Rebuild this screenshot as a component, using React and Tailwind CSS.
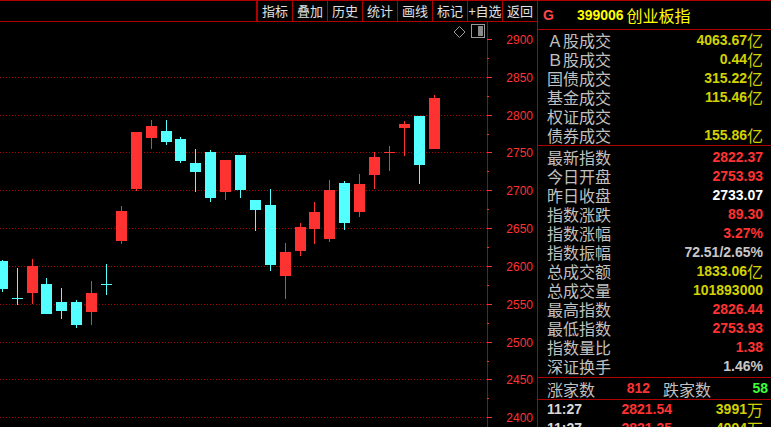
const RED = "#ff3232";
const CYAN = "#54ffff";
const LINE = "#b00000";

const cjk = { fontFamily: '"Noto Sans CJK SC", sans-serif' };
const num = { fontFamily: '"Liberation Sans", Arial, sans-serif' };

// x, bodyTop, bodyBottom, wickTop, wickBottom, up
const candles = [
  [-3, 261, 289, 260, 292, false],
  [12, 298, 298, 268, 305, false],
  [27, 266, 293, 259, 304, true],
  [41, 284, 314, 278, 314, false],
  [56, 302, 311, 288, 319, false],
  [71, 302, 325, 300, 328, false],
  [86, 293, 312, 281, 325, true],
  [101, 284, 284, 264, 295, false],
  [116, 211, 241, 206, 244, true],
  [131, 132, 189, 132, 191, true],
  [146, 126, 138, 120, 149, true],
  [161, 131, 142, 120, 145, false],
  [175, 139, 161, 137, 163, false],
  [190, 163, 172, 149, 192, false],
  [205, 152, 198, 150, 202, false],
  [220, 160, 192, 160, 200, true],
  [235, 155, 190, 155, 198, false],
  [250, 200, 210, 200, 231, false],
  [265, 205, 265, 189, 271, false],
  [280, 252, 276, 243, 299, true],
  [295, 227, 251, 223, 256, true],
  [309, 212, 229, 202, 244, true],
  [324, 190, 239, 180, 242, true],
  [339, 183, 223, 181, 230, false],
  [354, 184, 212, 174, 217, true],
  [369, 157, 175, 152, 189, true],
  [384, 152, 152, 146, 171, true],
  [399, 124, 128, 121, 156, true],
  [414, 116, 165, 116, 184, false],
  [429, 98, 149, 95, 149, true],
];

const levels = [2900, 2850, 2800, 2750, 2700, 2650, 2600, 2550, 2500, 2450, 2400];
const yOf = (p) => 39 + (2900 - p) * 0.7563;

const tools = ["指标", "叠加", "历史", "统计", "画线", "标记", "+自选", "返回"];

const tradeRows = [
  ["Ａ股成交", "4063.67", "亿"],
  ["Ｂ股成交", "0.44", "亿"],
  ["国债成交", "315.22", "亿"],
  ["基金成交", "115.46", "亿"],
  ["权证成交", "", ""],
  ["债券成交", "155.86", "亿"],
];

const indexRows = [
  ["最新指数", "2822.37", "", "text-[#ff3232]"],
  ["今日开盘", "2753.93", "", "text-[#ff3232]"],
  ["昨日收盘", "2733.07", "", "text-white"],
  ["指数涨跌", "89.30", "", "text-[#ff3232]"],
  ["指数涨幅", "3.27%", "", "text-[#ff3232]"],
  ["指数振幅", "72.51/2.65%", "", "text-[#c8c8c8]"],
  ["总成交额", "1833.06", "亿", "text-[#d2d200]"],
  ["总成交量", "101893000", "", "text-[#d2d200]"],
  ["最高指数", "2826.44", "", "text-[#ff3232]"],
  ["最低指数", "2753.93", "", "text-[#ff3232]"],
  ["指数量比", "1.38", "", "text-[#ff3232]"],
  ["深证换手", "1.46%", "", "text-[#c8c8c8]"],
];

const ticks = [
  ["11:27", "2821.54", "3991"],
  ["11:27", "2821.35", "4094"],
];

function Row({ label, value, unit, color }) {
  return (
    <div className="flex h-[19px] items-center pl-[9px] pr-[8px]">
      <span style={cjk} className="text-[16px] leading-[19px] text-[#c0c0c0]">
        {label}
      </span>
      <span className={`ml-auto flex items-center ${color}`}>
        <span style={num} className="text-[14px] font-bold leading-[19px]">
          {value}
        </span>
        {unit && (
          <span style={cjk} className="text-[16px] leading-[19px]">
            {unit}
          </span>
        )}
      </span>
    </div>
  );
}

function Chart() {
  return (
    <svg width="537" height="405" viewBox="0 22 537 405" className="block shrink-0">
      {levels.slice(1).map((p) => (
        <line
          key={p}
          x1="0"
          x2="487"
          y1={Math.round(yOf(p)) + 0.5}
          y2={Math.round(yOf(p)) + 0.5}
          stroke="#b00000"
          strokeDasharray="1 2"
        />
      ))}
      {candles.map(([x, bt, bb, wt, wb, up], i) => {
        const c = up ? RED : CYAN;
        return (
          <g key={i} fill={c}>
            <rect x={x + 5} y={wt} width="1" height={wb - wt} />
            <rect x={x} y={bt} width="11" height={Math.max(1, bb - bt)} />
          </g>
        );
      })}
      {/* view toggles at top right of the plot */}
      <polygon
        points="459.5,26.5 465,32 459.5,37.5 454,32"
        fill="none"
        stroke="#9a9a9a"
      />
      <rect x="471.5" y="24.5" width="13" height="13" fill="none" stroke="#9a9a9a" />
      <rect x="478" y="26" width="5" height="10" fill="#8a8a8a" />
      {/* price axis */}
      <line x1="487.5" x2="487.5" y1="22" y2="427" stroke={LINE} />
      {levels.map((p) => {
        const y = Math.round(yOf(p)) + 0.5;
        return (
          <g key={p}>
            <line x1="487" x2="492" y1={y} y2={y} stroke={RED} />
            <line x1="487" x2="489" y1={y + 19} y2={y + 19} stroke={RED} />
            <text
              x="533"
              y={y + 4.5}
              textAnchor="end"
              fill={RED}
              fontSize="12"
              fontFamily='"Liberation Sans", Arial, sans-serif'
            >
              {p}
            </text>
          </g>
        );
      })}
    </svg>
  );
}

export default function App() {
  return (
    <div className="flex h-[427px] w-[771px] overflow-hidden border-t border-[#b00000] bg-black">
      {/* chart column */}
      <div className="flex w-[537px] shrink-0 flex-col">
        <div className="flex h-[21px] shrink-0 border-b border-[#b00000]">
          <div className="flex-1" />
          <div className="w-[2px] bg-[#b00000]" />
          {tools.map((t, i) => (
            <div
              key={t}
              style={cjk}
              className={`flex items-center justify-center text-[13px] text-[#e0e0e0] ${
                i < tools.length - 1 ? "w-[35px] border-r border-[#b00000]" : "w-[34px]"
              }`}
            >
              {t}
            </div>
          ))}
        </div>
        <Chart />
      </div>

      {/* quote panel */}
      <div className="flex w-[234px] shrink-0 flex-col border-l border-[#b00000]">
        <div className="flex h-[29px] shrink-0 items-center border-b border-[#b00000] pl-[5px]">
          <span style={num} className="text-[14px] font-bold text-[#ff4646]">
            G
          </span>
          <span style={num} className="ml-[23px] text-[14px] font-bold text-[#ffff00]">
            399006
          </span>
          <span style={cjk} className="ml-[3px] text-[16px] text-[#ffff00]">
            创业板指
          </span>
        </div>

        <div className="shrink-0 border-b border-[#b00000] pt-[1px]">
          {tradeRows.map(([l, v, u]) => (
            <Row key={l} label={l} value={v} unit={u} color="text-[#d2d200]" />
          ))}
        </div>

        <div className="shrink-0 border-b border-[#b00000] pb-[1px] pt-[2px]">
          {indexRows.map(([l, v, u, c]) => (
            <Row key={l} label={l} value={v} unit={u} color={c} />
          ))}
        </div>

        <div className="flex h-[22px] shrink-0 items-center border-b border-[#b00000] pl-[9px] pr-[3px]">
          <span style={cjk} className="w-[48px] text-[16px] text-[#c0c0c0]">
            涨家数
          </span>
          <span style={num} className="w-[55px] text-right text-[14px] font-bold text-[#ff3232]">
            812
          </span>
          <span style={cjk} className="ml-[13px] text-[16px] text-[#c0c0c0]">
            跌家数
          </span>
          <span style={num} className="ml-auto text-[14px] font-bold text-[#3cff3c]">
            58
          </span>
        </div>

        <div className="shrink-0">
          {ticks.map(([t, p, v], i) => (
            <div key={i} className="flex h-[19px] items-center pl-[9px] pr-[8px]">
              <div className="flex w-[125px] justify-between">
                <span style={num} className="text-[14px] font-bold text-[#d8d8d8]">
                  {t}
                </span>
                <span style={num} className="text-[14px] font-bold text-[#ff3232]">
                  {p}
                </span>
              </div>
              <span className="ml-auto flex items-center text-[#d2d200]">
                <span style={num} className="text-[14px] font-bold">
                  {v}
                </span>
                <span style={cjk} className="text-[16px] leading-[19px]">
                  万
                </span>
              </span>
            </div>
          ))}
        </div>
      </div>
    </div>
  );
}
